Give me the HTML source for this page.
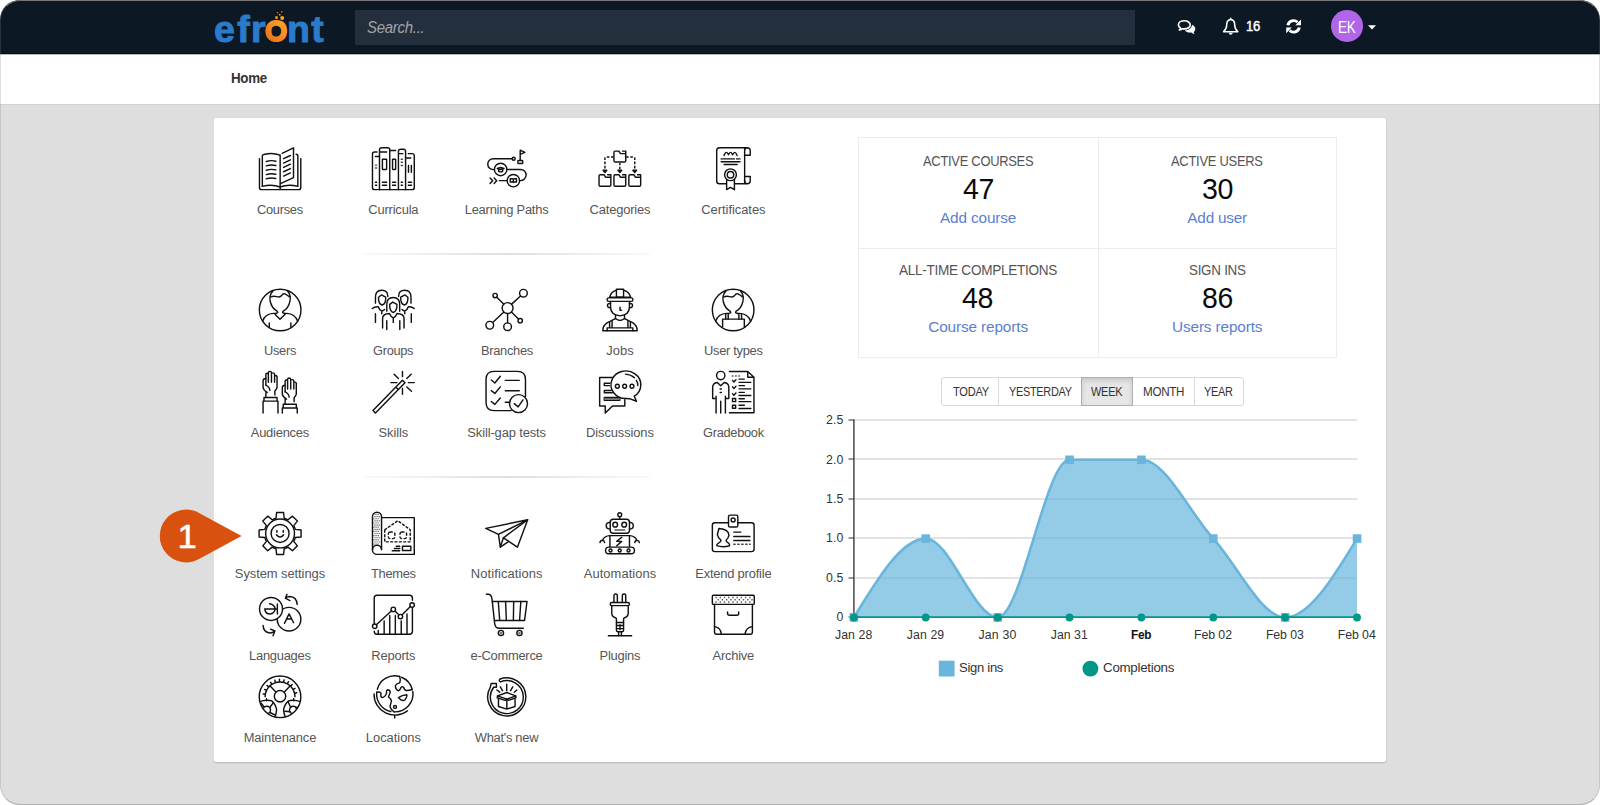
<!DOCTYPE html>
  <html lang="en">
  <head>
  <meta charset="utf-8">
  <title>eFront - Home</title>
  <style>
  *{box-sizing:border-box;margin:0;padding:0}
  html,body{width:1600px;height:805px;overflow:hidden;background:#fff}
  body{font-family:"Liberation Sans",Arial,sans-serif;color:#555;position:relative}
  #page{position:absolute;left:0;top:0;width:1600px;height:805px;background:#dedede;overflow:hidden}
  #mask{position:absolute;left:0;top:0;width:1600px;height:805px;border-radius:20px;border:1px solid rgba(128,128,128,.25);border-top-color:#77777c;border-bottom-color:#b2b2b2;box-shadow:0 0 0 40px #fff;z-index:50;pointer-events:none}
  #nav{position:absolute;left:0;top:0;width:1600px;height:54px;background:#0c1824;border-bottom:1px solid #040b15}
  #crumb{position:absolute;left:0;top:54px;width:1600px;height:51px;background:#fff;border-top:1px solid #b9bcbf;border-bottom:1px solid #d3d3d3}
  #search{position:absolute;left:355px;top:10px;width:780px;height:35px;background:#232f3c}
  #card{position:absolute;left:214px;top:118px;width:1172px;height:644px;background:#fff;border-radius:3px;box-shadow:0 1px 2px rgba(20,20,90,.2),-1px 0 0 rgba(255,255,255,.45)}
  .t{position:absolute;white-space:nowrap;display:block;text-decoration:none}
  svg{position:absolute;overflow:visible}
  svg.ic{width:44px;height:44px}
  svg.ic g{fill:none;stroke:#111;stroke-width:23;stroke-linecap:round;stroke-linejoin:round}
  .hr{position:absolute;left:363px;width:288px;height:2px;background:linear-gradient(to right,rgba(0,0,0,.02),rgba(0,0,0,.125),rgba(0,0,0,.02))}
  #stats{position:absolute;left:858px;top:137px;width:479px;height:221px;border:1px solid #ececec}
  #stats i{position:absolute;background:#ececec;display:block}
  #btns{position:absolute;left:941px;top:377px;width:303px;height:29px;border:1px solid #d9d9d9;border-radius:3px;background:#fff}
  #btns i{position:absolute;top:0;width:1px;height:27px;background:#dadada;display:block}
  #btns b{position:absolute;top:-1px;left:139px;width:52px;height:29px;background:#e6e6e6;border:1px solid #adadad;box-shadow:inset 0 3px 5px rgba(0,0,0,.125);display:block}
  </style>
  </head>
  <body>
  <div id="page">
  
<div id="nav"><div id="search"></div></div>
<span class="t" style="left:367.40px;top:17px;font-size:15.78px;line-height:21px;color:#a0a3a8;letter-spacing:-0.30px;transform:scaleX(0.9514);transform-origin:0 0;font-style:italic;">Search...</span>
<svg id="logo" style="left:205px;top:5px" width="130" height="45" viewBox="0 0 130 45">
  <defs><linearGradient id="og" x1="0" y1="1" x2="1" y2="0"><stop offset="0" stop-color="#ee6f20"/><stop offset="1" stop-color="#f9a521"/></linearGradient></defs>
  <text y="36.7" font-family="Liberation Sans, Arial, sans-serif" font-weight="bold" font-size="37.5" fill="#2a7bcb" stroke="#2a7bcb" stroke-width="1" stroke-linejoin="round" x="9 32.2 46 58.9 82 106.2">efr<tspan fill="#f3901f" stroke="none" font-size="40">o</tspan>nt</text>
  <circle cx="71.1" cy="26.1" r="8" fill="none" stroke="url(#og)" stroke-width="5.2"/>
  <circle cx="71.5" cy="12.6" r="1.5" fill="#f5951f"/><circle cx="77.2" cy="13" r="2" fill="#f9a521"/>
  <circle cx="74.7" cy="9.8" r="1" fill="#ee7d20"/><circle cx="72.5" cy="7.7" r=".8" fill="#e0701c"/><circle cx="76.8" cy="6.9" r=".8" fill="#e0701c"/>
  </svg>
<svg style="left:1177px;top:19px" width="19" height="16" viewBox="0 0 19 16">
  <path d="M7.6 11.3 C9 13 11 13.6 12.7 13.6 C13.3 13.6 13.8 13.5 14.3 13.4 C15.1 14.2 16.3 14.7 17.7 14.8 C17.1 14.2 16.7 13.6 16.5 12.9 C17.6 12.2 18.3 11.1 18.3 9.9 C18.3 8.1 17 6.5 15 5.8 C14.9 9.3 11.4 11.4 7.6 11.3 Z" fill="#fff"/>
  <path d="M7.3 1.8 C4 1.8 1.4 3.6 1.4 5.9 C1.4 7.1 2.2 8.2 3.5 9 C3.3 9.7 2.9 10.4 2.3 11 C3.7 10.9 4.9 10.4 5.7 9.7 C6.2 9.8 6.8 9.9 7.3 9.9 C10.6 9.9 13.2 8.1 13.2 5.9 C13.2 3.6 10.6 1.8 7.3 1.8 Z" fill="#0c1824" stroke="#fff" stroke-width="1.6" stroke-linejoin="round"/>
  </svg>
<svg style="left:1222px;top:17px" width="18" height="19" viewBox="0 0 18 19">
  <path d="M8.7 1.3 V2.4 M8.7 2.5 C6 2.8 4.7 5 4.7 7.8 C4.7 11.4 3.6 13.1 1.6 14.7 H15.8 C13.8 13.1 12.7 11.4 12.7 7.8 C12.7 5 11.4 2.8 8.7 2.5 Z" fill="none" stroke="#fff" stroke-width="1.5" stroke-linejoin="round" stroke-linecap="round"/>
  <path d="M6.7 15.7 a2 2 0 0 0 4 0 Z" fill="#fff"/>
  </svg>
<span class="t" style="left:1246.20px;top:17px;font-size:14.35px;line-height:19px;color:#fff;letter-spacing:-0.30px;transform:scaleX(0.9133);transform-origin:0 0;-webkit-text-stroke:.45px #fff;">16</span>
<svg style="left:1285px;top:18px" width="17" height="17" viewBox="0 0 17 17">
  <path d="M2.9 7.3 A5.8 5.8 0 0 1 12.6 4.3" fill="none" stroke="#fff" stroke-width="2.9"/>
  <path d="M16 1.6 V7.2 H10.4 Z" fill="#fff"/>
  <path d="M14.3 9.5 A5.8 5.8 0 0 1 4.6 12.5" fill="none" stroke="#fff" stroke-width="2.9"/>
  <path d="M1.2 15.2 V9.6 H6.8 Z" fill="#fff"/>
  </svg>
<div style="position:absolute;left:1331.2px;top:10.2px;width:31.6px;height:31.6px;border-radius:50%;background:#b066e6"></div>
<span class="t" style="left:1338.10px;top:17px;font-size:15.78px;line-height:21px;color:#fff;letter-spacing:-0.30px;transform:scaleX(0.8578);transform-origin:0 0;">EK</span>
<svg style="left:1367px;top:24px" width="10" height="6" viewBox="0 0 10 6"><path d="M1 1.2 H9 L5 5.4 Z" fill="#fff"/></svg>
<div id="crumb"></div>
<span class="t" style="left:230.80px;top:69px;font-size:14.35px;line-height:19px;color:#333;letter-spacing:-0.30px;transform:scaleX(0.9316);transform-origin:0 0;font-weight:bold;">Home</span>
<div id="card"></div>
<svg class="ic" style="left:258px;top:147px" viewBox="0 0 44 44"><g transform="translate(-3 -3) scale(0.06211)"><path d="M72 235 V700 Q72 735 105 735 H705 Q737 735 737 700 V235"/><path d="M118 682 V195 Q118 172 142 168 Q290 132 402 180"/><path d="M118 682 Q270 640 405 692 Q540 640 690 682 V195 Q690 165 662 165"/><path d="M405 182 V728"/><path d="M437 152 L620 62 V540 L410 637"/><path d="M182 282 Q260 255 335 277 M182 352 Q260 328 335 347 M182 422 Q260 398 335 417 M182 492 Q260 468 335 487 M182 560 Q260 540 335 555"/><path d="M460 237 L570 185 M460 307 L570 255 M460 377 L570 325 M460 447 L570 395 M460 517 L570 465"/></g></svg>
<span class="t" style="left:256.95px;top:201px;font-size:12.91px;line-height:17px;color:#555;letter-spacing:-0.30px;transform:scaleX(0.9962);transform-origin:0 0;">Courses</span>
<svg class="ic" style="left:371px;top:147px" viewBox="0 0 44 44"><g transform="translate(-3 -3) scale(0.06211)"><path d="M145 130 H105 Q72 130 72 165 V705 Q72 735 105 735 H710 Q745 735 745 705 V190 Q745 155 710 155 H650"/><path d="M185 735 V95 Q185 60 220 60 H315 Q350 60 350 95 V735"/><path d="M350 105 H445 M120 200 H185 M200 130 H300 M505 155 H560 M620 225 H690"/><path d="M490 735 V120 Q490 85 525 85 H570 Q605 85 605 120 V735"/><rect x="232" y="245" width="68" height="165" rx="6"/><rect x="395" y="245" width="50" height="165" rx="6"/><path d="M120 340 H140 M120 385 H140 M535 245 H555 M535 295 H555 M535 345 H555" opacity=".75"/><path d="M652 345 V455 M698 345 V455"/><path d="M120 615 H140 M120 665 H140 M232 615 H300 M232 665 H300 M395 615 H445 M395 665 H445 M535 615 H555 M535 665 H555 M650 615 H700 M650 665 H700"/></g></svg>
<span class="t" style="left:368.30px;top:201px;font-size:12.91px;line-height:17px;color:#555;letter-spacing:-0.18px;">Curricula</span>
<svg class="ic" style="left:485px;top:147px" viewBox="0 0 44 44"><g transform="translate(-3 -3) scale(0.06211)"><circle cx="510" cy="238" r="24"/><path d="M486 238 H180 A87 87 0 0 0 180 412 H200"/><circle cx="300" cy="410" r="100"/><path d="M400 410 H620 A90 90 0 0 1 620 590 H605"/><circle cx="505" cy="590" r="100"/><path d="M280 590 H405"/><path d="M130 548 L172 590 L130 635 M195 548 L237 590 L195 635"/><path d="M615 100 V265 M615 100 L690 135 L615 168"/><rect x="578" y="265" width="77" height="50" rx="10"/><path d="M245 395 L300 378 L355 395 L300 412 Z"/><path d="M268 412 V440 Q300 458 333 440 V412"/><path d="M455 560 H490 Q505 560 505 575 V620 Q505 612 490 612 H455 Z M555 560 H520 Q505 560 505 575 V620 Q505 612 520 612 H555 Z"/></g></svg>
<span class="t" style="left:464.70px;top:201px;font-size:12.91px;line-height:17px;color:#555;letter-spacing:-0.22px;">Learning Paths</span>
<svg class="ic" style="left:598px;top:147px" viewBox="0 0 44 44"><g transform="translate(-3 -3) scale(0.06211)"><path d="M305 270 V135 Q305 115 325 115 H385 L410 155 H495 V270 Q495 290 475 290 H325 Q305 290 305 270 Z M445 115 H495 V155"/><path d="M65 660 V515 Q65 495 85 495 H145 L170 535 H255 V660 Q255 680 235 680 H85 Q65 680 65 660 Z M205 495 H255 V535"/><path d="M305 660 V515 Q305 495 325 495 H385 L410 535 H495 V660 Q495 680 475 680 H325 Q305 680 305 660 Z M445 495 H495 V535"/><path d="M545 660 V515 Q545 495 565 495 H625 L650 535 H735 V660 Q735 680 715 680 H565 Q545 680 545 660 Z M685 495 H735 V535"/><path d="M300 208 H180 Q160 208 160 228 V405 M500 208 H620 Q640 208 640 228 V405 M400 300 V405" stroke-dasharray="42 26" stroke-linecap="butt"/><path d="M130 424 H190 L160 458 Z M370 424 H430 L400 458 Z M610 424 H670 L640 458 Z" fill="#111"/></g></svg>
<span class="t" style="left:589.60px;top:201px;font-size:12.91px;line-height:17px;color:#555;letter-spacing:-0.18px;">Categories</span>
<svg class="ic" style="left:711px;top:147px" viewBox="0 0 44 44"><g transform="translate(-3 -3) scale(0.06211)"><path d="M290 640 H185 Q140 640 140 595 V105 Q140 60 185 60 H630 Q680 60 680 110 V182 H590"/><path d="M590 110 Q590 60 632 60 M590 75 V625"/><path d="M590 522 H680 V590 Q680 640 632 640 H435 M590 590 Q590 640 632 640"/><path d="M258 185 Q275 135 295 135 Q315 135 330 175 Q345 135 362 135 Q380 135 395 175 Q415 135 432 135 Q450 135 468 185"/><path d="M212 240 H425 M460 240 H515 M212 285 H515 M260 330 H470"/><circle cx="362" cy="495" r="95"/><circle cx="362" cy="495" r="52"/><path d="M300 572 V735 L362 700 L425 735 V572"/></g></svg>
<span class="t" style="left:701.30px;top:201px;font-size:12.91px;line-height:17px;color:#555;letter-spacing:-0.03px;">Certificates</span>
<svg class="ic" style="left:258px;top:288px" viewBox="0 0 44 44"><g transform="translate(-3 -3) scale(0.06211)"><circle cx="405" cy="403" r="335"/><path d="M290 92 Q225 170 245 262 Q268 372 360 425 L366 446 L330 462"/><path d="M522 92 Q585 170 562 262 Q540 372 450 425 L444 446 L478 462"/><path d="M255 190 Q300 172 350 187 Q402 203 430 170 Q448 132 482 142 Q522 162 552 190"/><path d="M125 582 Q160 462 300 457 H335 M475 457 H510 Q642 462 687 582"/><path d="M322 470 L402 550 L485 470"/><path d="M230 612 V682 M577 612 V682"/></g></svg>
<span class="t" style="left:263.85px;top:342px;font-size:12.91px;line-height:17px;color:#555;letter-spacing:-0.30px;transform:scaleX(0.9936);transform-origin:0 0;">Users</span>
<svg class="ic" style="left:371px;top:288px" viewBox="0 0 44 44"><g transform="translate(-3 -3) scale(0.06211)"><path d="M120 292 V200 Q120 85 220 85 Q320 85 320 185"/><path d="M170 197 L215 160 L285 197 Q292 300 227 322 Q163 300 170 197 Z"/><path d="M70 378 Q110 343 165 350 Q180 400 225 420 Q250 410 267 395 M222 420 V462 M120 462 V602"/><path d="M692 292 V200 Q692 85 592 85 Q492 85 492 185"/><path d="M642 197 L597 160 L527 197 Q520 300 585 322 Q649 300 642 197 Z"/><path d="M745 378 Q702 343 650 350 Q635 400 590 420 Q565 410 548 395 M592 420 V462 M697 462 V602"/><path d="M303 422 V310 Q303 200 405 200 Q510 200 510 310 V422"/><path d="M350 312 L400 275 L465 312 Q472 420 407 442 Q343 420 350 312 Z"/><path d="M235 692 V540 Q235 465 345 460 Q365 510 407 530 Q450 510 467 460 Q580 465 580 540 V692 M407 530 V602 M302 577 V717 M512 577 V717"/></g></svg>
<span class="t" style="left:373.15px;top:342px;font-size:12.91px;line-height:17px;color:#555;letter-spacing:-0.30px;transform:scaleX(0.9919);transform-origin:0 0;">Groups</span>
<svg class="ic" style="left:485px;top:288px" viewBox="0 0 44 44"><g transform="translate(-3 -3) scale(0.06211)"><circle cx="412" cy="372" r="88"/><circle cx="667" cy="132" r="62"/><circle cx="212" cy="170" r="35"/><circle cx="125" cy="648" r="62"/><circle cx="412" cy="672" r="62"/><circle cx="615" cy="575" r="35"/><path d="M620 176 L478 308 M238 196 L348 306 M172 604 L348 438 M412 462 V608 M478 438 L588 548"/></g></svg>
<span class="t" style="left:480.60px;top:342px;font-size:12.91px;line-height:17px;color:#555;letter-spacing:-0.30px;transform:scaleX(0.9953);transform-origin:0 0;">Branches</span>
<svg class="ic" style="left:598px;top:288px" viewBox="0 0 44 44"><g transform="translate(-3 -3) scale(0.06211)"><path d="M235 197 Q262 102 345 85 M460 85 Q545 102 575 197 M235 197 H575"/><rect x="345" y="68" width="115" height="129"/><rect x="195" y="207" width="415" height="57" rx="26"/><path d="M250 266 V350 Q250 482 402 497 Q555 482 555 350 V266"/><path d="M250 300 Q200 290 200 330 Q205 370 250 365 M555 300 Q605 290 605 330 Q600 370 555 365"/><path d="M403 357 V407 H425"/><path d="M330 490 V540 Q402 602 475 540 V490"/><path d="M330 540 L200 605 Q125 650 125 737 H680 Q680 650 605 605 L475 540"/><path d="M235 600 V690 M275 585 V690 M530 585 V690 M570 600 V690 M195 737 V690 H610 V737"/></g></svg>
<span class="t" style="left:606.15px;top:342px;font-size:12.91px;line-height:17px;color:#555;letter-spacing:0.14px;">Jobs</span>
<svg class="ic" style="left:711px;top:288px" viewBox="0 0 44 44"><g transform="translate(-3 -3) scale(0.06211)"><circle cx="405" cy="403" r="335"/><path d="M290 92 Q225 170 245 262 Q268 372 360 425 L366 446 L330 462"/><path d="M522 92 Q585 170 562 262 Q540 372 450 425 L444 446 L478 462"/><path d="M255 190 Q300 172 350 187 Q402 203 430 170 Q448 132 482 142 Q522 162 552 190"/><path d="M125 582 Q160 462 300 457 H335 M475 457 H510 Q642 462 687 582"/><path d="M285 462 V550 M325 462 V550 M497 462 V550 M540 462 V550"/><path d="M235 672 V550 H585 V672"/></g></svg>
<span class="t" style="left:703.95px;top:342px;font-size:12.91px;line-height:17px;color:#555;letter-spacing:-0.30px;transform:scaleX(0.9984);transform-origin:0 0;">User types</span>
<svg class="ic" style="left:258px;top:370px" viewBox="0 0 44 44"><g transform="translate(-3 -3) scale(0.06211)"><path d="M175 185 Q130 185 130 222 V330 Q135 372 197 410 M175 412 V490"/><path d="M175 292 V120 Q175 100 195 100 Q215 100 215 120 M215 245 V92 Q215 70 240 70 Q265 70 265 92 V245 M265 102 Q268 95 290 95 Q315 95 315 120 V245 M315 137 Q342 130 355 152 V330 Q350 352 320 387 V450"/><path d="M175 292 Q230 312 240 377"/><path d="M145 550 V490 H355 V550 M130 742 V550 H370 V742"/><g transform="translate(310 108)"><path d="M175 185 Q130 185 130 222 V330 Q135 372 197 410 M175 412 V490"/><path d="M175 292 V120 Q175 100 195 100 Q215 100 215 120 M215 245 V92 Q215 70 240 70 Q265 70 265 92 V245 M265 102 Q268 95 290 95 Q315 95 315 120 V245 M315 137 Q342 130 355 152 V330 Q350 352 320 387 V450"/><path d="M175 292 Q230 312 240 377"/></g><path d="M455 660 V600 H665 V660 M440 742 V660 H680 V742"/></g></svg>
<span class="t" style="left:250.75px;top:424px;font-size:12.91px;line-height:17px;color:#555;letter-spacing:-0.22px;">Audiences</span>
<svg class="ic" style="left:371px;top:370px" viewBox="0 0 44 44"><g transform="translate(-3 -3) scale(0.06211)"><path d="M80 700 L555 215 L595 255 L120 740 Z M450 325 L487 362"/><path d="M555 70 V155 M555 345 V440 M370 252 H465 M650 252 H745 M420 115 L490 185 M695 115 L625 185 M625 322 L700 392"/></g></svg>
<span class="t" style="left:378.60px;top:424px;font-size:12.91px;line-height:17px;color:#555;letter-spacing:-0.11px;">Skills</span>
<svg class="ic" style="left:485px;top:370px" viewBox="0 0 44 44"><g transform="translate(-3 -3) scale(0.06211)"><path d="M470 702 H195 Q65 702 65 572 V200 Q65 70 195 70 H570 Q700 70 700 200 V477"/><path d="M150 210 L207 257 L295 150 M150 380 L207 427 L295 320 M150 555 L207 602 L295 500"/><path d="M375 215 H600 M375 383 H600 M375 568 H437"/><circle cx="588" cy="590" r="145"/><path d="M520 590 L582 642 L660 530"/></g></svg>
<span class="t" style="left:467.35px;top:424px;font-size:12.91px;line-height:17px;color:#555;letter-spacing:-0.12px;">Skill-gap tests</span>
<svg class="ic" style="left:598px;top:370px" viewBox="0 0 44 44"><g transform="translate(-3 -3) scale(0.06211)"><path d="M285 170 H75 V627 H165 V742 L282 627 H480 V525"/><path d="M240 262 H150 V300 H232 M262 377 H150 V415 H280 M400 490 H150 V537 H400 Z"/><path d="M150 513 H400" stroke="#666" stroke-width="30"/><path d="M632 470 L668 552 L555 510 Q525 508 495 508 A240 222 0 1 1 632 470 Z"/><circle cx="360" cy="310" r="31"/><circle cx="477" cy="310" r="31"/><circle cx="595" cy="310" r="31"/><path d="M490 115 Q580 122 635 172 M665 215 Q690 250 690 297"/></g></svg>
<span class="t" style="left:586.05px;top:424px;font-size:12.91px;line-height:17px;color:#555;letter-spacing:-0.10px;">Discussions</span>
<svg class="ic" style="left:711px;top:370px" viewBox="0 0 44 44"><g transform="translate(-3 -3) scale(0.06211)"><circle cx="205" cy="138" r="67"/><path d="M130 742 V470 M130 507 H75 V330 Q75 260 150 250 L205 302 L260 250 Q335 260 335 330 V507 H280 M280 470 V742 M205 552 V742"/><path d="M195 355 H215 M195 410 H215"/><path d="M345 72 H640 L740 165 V737 H345 M640 72 V165 H740"/><path d="M390 145 H402 M443 145 H455 M495 145 H507" opacity=".7"/><path d="M395 215 L417 240 L450 205 M395 320 L417 345 L450 310 M395 430 L417 455 L450 420"/><path d="M500 195 H585 M500 247 H690 M500 300 H585 M500 352 H690 M500 408 H585 M500 460 H690 M500 510 H585 M500 558 H690 M500 615 H585 M500 667 H690"/><rect x="395" y="508" width="50" height="50"/><rect x="395" y="615" width="50" height="50"/></g></svg>
<span class="t" style="left:702.85px;top:424px;font-size:12.91px;line-height:17px;color:#555;letter-spacing:-0.30px;transform:scaleX(0.9934);transform-origin:0 0;">Gradebook</span>
<svg class="ic" style="left:258px;top:511px" viewBox="0 0 44 44"><g transform="translate(-3 -3) scale(0.06211)"><path d="M338.0 164.7 L348.0 72.0 L460.0 72.0 L470.0 164.7 A254 254 0 0 1 530.8 189.9 L603.4 131.4 L682.6 210.6 L624.1 283.2 A254 254 0 0 1 649.3 344.0 L742.0 354.0 L742.0 466.0 L649.3 476.0 A254 254 0 0 1 624.1 536.8 L682.6 609.4 L603.4 688.6 L530.8 630.1 A254 254 0 0 1 470.0 655.3 L460.0 748.0 L348.0 748.0 L338.0 655.3 A254 254 0 0 1 277.2 630.1 L204.6 688.6 L125.4 609.4 L183.9 536.8 A254 254 0 0 1 158.7 476.0 L66.0 466.0 L66.0 354.0 L158.7 344.0 A254 254 0 0 1 183.9 283.2 L125.4 210.6 L204.6 131.4 L277.2 189.9 A254 254 0 0 1 338.0 164.7 Z"/><circle cx="404" cy="410" r="232"/><circle cx="404" cy="410" r="145"/><path d="M353 362 V390 M455 362 V390 M345 430 Q403 502 462 430"/></g></svg>
<span class="t" style="left:234.85px;top:565px;font-size:12.91px;line-height:17px;color:#555;letter-spacing:-0.06px;">System settings</span>
<svg class="ic" style="left:371px;top:511px" viewBox="0 0 44 44"><g transform="translate(-3 -3) scale(0.06211)"><path d="M218 662 V140 A73 73 0 0 0 72 140 V675 A73 73 0 0 0 145 747 H745 V155 H218"/><path d="M72 672 A73 73 0 0 1 218 672"/><path d="M86 105 h19 M120 105 h19 M154 105 h19 M103 139 h19 M137 139 h19 M171 139 h19 M86 173 h19 M120 173 h19 M154 173 h19 M103 207 h19 M137 207 h19 M171 207 h19 M86 241 h19 M120 241 h19 M154 241 h19 M103 275 h19 M137 275 h19 M171 275 h19 M86 309 h19 M120 309 h19 M154 309 h19 M103 343 h19 M137 343 h19 M171 343 h19 M86 377 h19 M120 377 h19 M154 377 h19 M103 411 h19 M137 411 h19 M171 411 h19 M86 445 h19 M120 445 h19 M154 445 h19 M103 479 h19 M137 479 h19 M171 479 h19 M86 513 h19 M120 513 h19 M154 513 h19 M103 547 h19 M137 547 h19 M171 547 h19 M86 581 h19 M120 581 h19 M154 581 h19 " stroke="#555" stroke-width="19" stroke-linecap="butt"/><path d="M270 350 L480 205 L680 350 V545 H270 Z" stroke-dasharray="32 38"/><rect x="327" y="387" width="106" height="106" rx="30" stroke-dasharray="34 42"/><rect x="515" y="387" width="106" height="106" rx="30" stroke-dasharray="34 42"/><rect x="555" y="615" width="135" height="70"/><path d="M455 617 H510 M425 652 H510 M390 687 H510"/></g></svg>
<span class="t" style="left:370.90px;top:565px;font-size:12.91px;line-height:17px;color:#555;letter-spacing:-0.30px;transform:scaleX(0.9971);transform-origin:0 0;">Themes</span>
<svg class="ic" style="left:485px;top:511px" viewBox="0 0 44 44"><g transform="translate(-3 -3) scale(0.06211)"><path d="M60 328 L735 190 L265 425 Z"/><path d="M265 425 L295 630 L345 480"/><path d="M735 190 L345 480 L570 630 Z"/><path d="M295 630 L420 545"/></g></svg>
<span class="t" style="left:470.80px;top:565px;font-size:12.91px;line-height:17px;color:#555;letter-spacing:0.12px;">Notifications</span>
<svg class="ic" style="left:598px;top:511px" viewBox="0 0 44 44"><g transform="translate(-3 -3) scale(0.06211)"><circle cx="398" cy="108" r="31"/><path d="M398 140 V180"/><rect x="245" y="180" width="310" height="226" rx="48"/><circle cx="325" cy="268" r="38"/><circle cx="470" cy="268" r="38"/><path d="M322 355 H480" stroke="#555"/><path d="M245 230 Q180 235 180 285 Q180 335 245 340 M555 230 Q617 235 617 285 Q617 335 555 340"/><path d="M240 625 V445 H555 V625"/><path d="M430 470 L350 537 H430 L350 607"/><path d="M240 445 Q150 450 120 520 M80 557 Q85 520 120 520 Q150 525 155 557 M555 445 Q645 450 675 520 M640 557 Q645 520 675 520 Q710 525 715 557"/><rect x="170" y="630" width="465" height="107" rx="53"/><circle cx="250" cy="683" r="24"/><circle cx="398" cy="683" r="24"/><circle cx="540" cy="683" r="24"/></g></svg>
<span class="t" style="left:583.70px;top:565px;font-size:12.91px;line-height:17px;color:#555;letter-spacing:0.08px;">Automations</span>
<svg class="ic" style="left:711px;top:511px" viewBox="0 0 44 44"><g transform="translate(-3 -3) scale(0.06211)"><path d="M330 237 H110 Q70 237 70 277 V660 Q70 702 110 702 H700 Q742 702 742 660 V277 Q742 237 700 237 H480"/><rect x="330" y="115" width="150" height="192" rx="26"/><circle cx="405" cy="192" r="32"/><path d="M175 330 Q240 338 270 350 Q330 372 337 440 Q330 482 290 520 Q290 545 330 565 Q352 585 347 607 Q240 642 140 607 Q135 580 175 560 Q210 545 210 520 Q160 480 150 430 Q165 380 175 330 Z"/><path d="M415 388 H530 M415 458 H675 M415 523 H675"/><path d="M415 583 H680" stroke-dasharray="22 42" opacity=".8"/></g></svg>
<span class="t" style="left:695.25px;top:565px;font-size:12.91px;line-height:17px;color:#555;letter-spacing:-0.20px;">Extend profile</span>
<svg class="ic" style="left:258px;top:593px" viewBox="0 0 44 44"><g transform="translate(-3 -3) scale(0.06211)"><circle cx="548" cy="470" r="190"/><circle cx="258" cy="305" r="185" fill="#fff"/><path d="M360 225 V387 M155 305 H360 M160 322 Q175 387 240 387 Q312 380 327 305 Q312 237 235 222"/><path d="M475 537 L548 385 L622 527 M510 467 H587"/><path d="M680 232 Q670 112 560 105 Q520 105 490 130 M515 70 L488 132 L562 170"/><path d="M130 570 Q135 682 240 692 Q280 694 315 667 M250 630 L320 660 L290 737"/></g></svg>
<span class="t" style="left:249.05px;top:647px;font-size:12.91px;line-height:17px;color:#555;letter-spacing:-0.25px;">Languages</span>
<svg class="ic" style="left:371px;top:593px" viewBox="0 0 44 44"><g transform="translate(-3 -3) scale(0.06211)"><path d="M100 545 V130 Q100 85 145 85 H670 Q715 85 715 130 V165 M715 282 V665 Q715 712 670 712 H145 Q100 712 100 665"/><circle cx="108" cy="583" r="36"/><circle cx="408" cy="312" r="36"/><circle cx="522" cy="428" r="36"/><circle cx="710" cy="240" r="36"/><path d="M135 560 L380 335 M435 340 L495 400 M550 400 L683 267"/><path d="M165 650 V707 M260 500 V707 M350 410 V707 M440 410 V707 M535 500 V707 M628 385 V707"/></g></svg>
<span class="t" style="left:371.35px;top:647px;font-size:12.91px;line-height:17px;color:#555;letter-spacing:-0.18px;">Reports</span>
<svg class="ic" style="left:485px;top:593px" viewBox="0 0 44 44"><g transform="translate(-3 -3) scale(0.06211)"><path d="M70 68 H100 Q150 70 160 140 L205 545 Q215 617 280 617 H665"/><path d="M168 185 H725 L685 490 H200"/><path d="M262 185 L285 490 M380 185 L392 490 M510 185 L505 490 M625 185 L605 490"/><circle cx="305" cy="692" r="42"/><circle cx="603" cy="692" r="42"/><circle cx="305" cy="692" r="10" fill="#777" stroke="#777"/><circle cx="603" cy="692" r="10" fill="#777" stroke="#777"/></g></svg>
<span class="t" style="left:470.60px;top:647px;font-size:12.91px;line-height:17px;color:#555;letter-spacing:-0.27px;">e-Commerce</span>
<svg class="ic" style="left:598px;top:593px" viewBox="0 0 44 44"><g transform="translate(-3 -3) scale(0.06211)"><path d="M305 200 V90 Q305 65 332 65 Q360 65 360 90 V200 M440 200 V90 Q440 65 468 65 Q495 65 495 90 V200"/><rect x="245" y="200" width="310" height="52" rx="26"/><path d="M270 252 V370 Q270 430 330 447 Q345 452 345 470 V650 Q345 672 365 672 H440 Q460 672 460 650 V470 Q460 452 475 447 Q535 430 535 370 V252"/><path d="M345 522 H460 M355 572 H450 M355 622 H450 M403 557 V637"/><path d="M380 672 V732 M425 672 V732"/><path d="M215 737 H590"/></g></svg>
<span class="t" style="left:599.60px;top:647px;font-size:12.91px;line-height:17px;color:#555;letter-spacing:-0.26px;">Plugins</span>
<svg class="ic" style="left:711px;top:593px" viewBox="0 0 44 44"><g transform="translate(-3 -3) scale(0.06211)"><rect x="70" y="85" width="675" height="147" rx="16"/><path d="M119 122 h22 M187 122 h22 M255 122 h22 M323 122 h22 M391 122 h22 M459 122 h22 M527 122 h22 M595 122 h22 M663 122 h22 M153 158 h22 M221 158 h22 M289 158 h22 M357 158 h22 M425 158 h22 M493 158 h22 M561 158 h22 M629 158 h22 M697 158 h22 M119 194 h22 M187 194 h22 M255 194 h22 M323 194 h22 M391 194 h22 M459 194 h22 M527 194 h22 M595 194 h22 M663 194 h22 " stroke="#555" stroke-width="24" stroke-linecap="butt"/><path d="M105 232 V675 Q105 712 140 712 H680 Q715 712 715 675 V232"/><path d="M315 355 V375 Q315 407 345 407 H465 Q495 407 495 375 V355"/><path d="M105 590 Q205 600 215 712 M715 590 Q610 600 595 712"/></g></svg>
<span class="t" style="left:712.55px;top:647px;font-size:12.91px;line-height:17px;color:#555;letter-spacing:-0.23px;">Archive</span>
<svg class="ic" style="left:258px;top:675px" viewBox="0 0 44 44"><g transform="translate(-3 -3) scale(0.06211)"><clipPath id="mc"><circle cx="403" cy="400" r="330"/></clipPath><circle cx="403" cy="400" r="335"/><circle cx="403" cy="390" r="92"/><path d="M163 400 A240 240 0 0 1 643 400"/><path d="M165 359 L132 354 M184 294 L153 281 M219 238 L193 216 M269 193 L250 165 M329 164 L318 131 M395 152 L393 118 M461 159 L469 126 M523 184 L540 155 M576 225 L600 202 M615 279 L645 263 M638 342 L671 335 "/><path d="M332 318 L240 222 M476 318 L568 222"/><g clip-path="url(#mc)"><path d="M70 478 Q185 438 270 465 Q335 520 348 610 Q342 670 322 725"/><path d="M736 478 Q620 438 540 465 Q474 520 460 610 Q465 670 488 725"/><circle cx="190" cy="612" r="60"/><circle cx="616" cy="612" r="60"/><path d="M185 430 V462 M622 430 V462 M95 500 L145 560 M238 572 L290 500 M240 652 L322 692 M575 572 L535 482 M565 640 L480 632 M655 575 L715 560 M130 650 L170 668 M650 660 L690 640"/></g></g></svg>
<span class="t" style="left:243.65px;top:729px;font-size:12.91px;line-height:17px;color:#555;letter-spacing:-0.12px;">Maintenance</span>
<svg class="ic" style="left:371px;top:675px" viewBox="0 0 44 44"><g transform="translate(-3 -3) scale(0.06211)"><path d="M150 277 A290 290 0 0 1 510 72 M540 85 A290 290 0 0 1 712 282 M722 312 A290 290 0 0 1 420 642 M140 327 A290 290 0 0 0 367 637"/><path d="M97 355 A335 335 0 0 0 637 624 M430 692 V742"/><path d="M510 72 Q530 130 510 175 Q440 190 440 237 Q450 292 490 302 Q520 292 530 250 Q550 220 575 250 Q590 302 620 297 Q670 297 712 282"/><path d="M140 327 Q190 315 210 340 Q195 400 230 412 Q280 400 300 340 Q290 290 320 285 Q362 290 357 335 Q340 370 330 402 Q370 430 377 470 Q360 520 355 560 Q370 612 420 642"/><path d="M490 412 Q550 370 620 365 Q642 380 600 442 Q570 472 530 450 Z"/><circle cx="435" cy="562" r="24"/></g></svg>
<span class="t" style="left:365.85px;top:729px;font-size:12.91px;line-height:17px;color:#555;letter-spacing:-0.02px;">Locations</span>
<svg class="ic" style="left:485px;top:675px" viewBox="0 0 44 44"><g transform="translate(-3 -3) scale(0.06211)"><path d="M290 113 A307 307 0 1 1 133 246 L147 185 H232 V245 H188 M297 160 A265 265 0 1 1 188 245 M290 113 Q262 137 297 160"/><path d="M250 385 L400 330 L542 385 L400 437 Z"/><path d="M265 437 V555 L400 597 L532 555 V437 M400 437 V597"/><path d="M250 385 L245 415 L370 457 L400 437 M542 385 L547 415 L425 457 L400 437"/><path d="M398 195 V300 M295 240 L330 300 M495 240 L460 300 M240 290 L285 325 M560 290 L520 325"/></g></svg>
<span class="t" style="left:474.85px;top:729px;font-size:12.91px;line-height:17px;color:#555;letter-spacing:-0.30px;">What's new</span>
<div class="hr" style="top:253px"></div>
<div class="hr" style="top:476px"></div>
<svg style="left:155px;top:505px" width="92" height="62" viewBox="155 505 92 62">
  <path d="M241.6 536 L199.5 513.2 A26.4 26.4 0 1 0 199.5 558.8 Z" fill="#d9510f"/>
  <text x="187.2" y="547.7" text-anchor="middle" font-family="Liberation Sans, Arial, sans-serif" font-size="34" fill="#fff" stroke="#fff" stroke-width=".7">1</text>
  </svg>
<div id="stats"><i style="left:239px;top:0;width:1px;height:219px"></i><i style="left:0;top:109.5px;width:477px;height:1px"></i></div>
<span class="t" style="left:922.90px;top:152px;font-size:14.35px;line-height:19px;color:#555;letter-spacing:-0.30px;transform:scaleX(0.9000);transform-origin:0 0;">ACTIVE COURSES</span>
<span class="t" style="left:962.50px;top:169px;font-size:29.72px;line-height:39px;color:#0a0a0a;letter-spacing:-0.30px;transform:scaleX(0.9588);transform-origin:0 0;">47</span>
<a class="t" style="left:939.95px;top:208px;font-size:15.37px;line-height:20px;color:#5b80d0;letter-spacing:-0.14px;">Add course</a>
<span class="t" style="left:1171.30px;top:152px;font-size:14.35px;line-height:19px;color:#555;letter-spacing:-0.30px;transform:scaleX(0.9023);transform-origin:0 0;">ACTIVE USERS</span>
<span class="t" style="left:1201.55px;top:169px;font-size:29.72px;line-height:39px;color:#0a0a0a;letter-spacing:-0.30px;transform:scaleX(0.9619);transform-origin:0 0;">30</span>
<a class="t" style="left:1187.30px;top:208px;font-size:15.37px;line-height:20px;color:#5b80d0;letter-spacing:-0.22px;">Add user</a>
<span class="t" style="left:898.95px;top:261px;font-size:14.35px;line-height:19px;color:#555;letter-spacing:-0.30px;transform:scaleX(0.9472);transform-origin:0 0;">ALL-TIME COMPLETIONS</span>
<span class="t" style="left:962.45px;top:278px;font-size:29.72px;line-height:39px;color:#0a0a0a;letter-spacing:-0.30px;transform:scaleX(0.9619);transform-origin:0 0;">48</span>
<a class="t" style="left:928.20px;top:317px;font-size:15.37px;line-height:20px;color:#5b80d0;letter-spacing:-0.13px;">Course reports</a>
<span class="t" style="left:1188.80px;top:261px;font-size:14.35px;line-height:19px;color:#555;letter-spacing:-0.30px;transform:scaleX(0.9360);transform-origin:0 0;">SIGN INS</span>
<span class="t" style="left:1201.65px;top:278px;font-size:29.72px;line-height:39px;color:#0a0a0a;letter-spacing:-0.30px;transform:scaleX(0.9558);transform-origin:0 0;">86</span>
<a class="t" style="left:1172.00px;top:317px;font-size:15.37px;line-height:20px;color:#5b80d0;letter-spacing:-0.14px;">Users reports</a>
<div id="btns"><i style="left:56px"></i><i style="left:252px"></i><b></b></div>
<span class="t" style="left:952.65px;top:384px;font-size:12.3px;line-height:16px;color:#333;letter-spacing:-0.30px;transform:scaleX(0.9016);transform-origin:0 0;">TODAY</span>
<span class="t" style="left:1008.80px;top:384px;font-size:12.3px;line-height:16px;color:#333;letter-spacing:-0.30px;transform:scaleX(0.8849);transform-origin:0 0;">YESTERDAY</span>
<span class="t" style="left:1091.45px;top:384px;font-size:12.3px;line-height:16px;color:#333;letter-spacing:-0.30px;transform:scaleX(0.8918);transform-origin:0 0;">WEEK</span>
<span class="t" style="left:1143.05px;top:384px;font-size:12.3px;line-height:16px;color:#333;letter-spacing:-0.30px;transform:scaleX(0.9455);transform-origin:0 0;">MONTH</span>
<span class="t" style="left:1204.30px;top:384px;font-size:12.3px;line-height:16px;color:#333;letter-spacing:-0.30px;transform:scaleX(0.8898);transform-origin:0 0;">YEAR</span>
<svg style="left:810px;top:405px" width="580" height="290" viewBox="810 405 580 290" font-family="Liberation Sans, Arial, sans-serif"><path d="M848.5 617.00 H853.9" stroke="#444" stroke-width="1.1"/><path d="M853.9 578.00 H1357.1" stroke="#c6c6c6" stroke-width="1"/><path d="M848.5 578.00 H853.9" stroke="#444" stroke-width="1.1"/><path d="M853.9 538.00 H1357.1" stroke="#c6c6c6" stroke-width="1"/><path d="M848.5 538.00 H853.9" stroke="#444" stroke-width="1.1"/><path d="M853.9 499.00 H1357.1" stroke="#c6c6c6" stroke-width="1"/><path d="M848.5 499.00 H853.9" stroke="#444" stroke-width="1.1"/><path d="M853.9 459.00 H1357.1" stroke="#c6c6c6" stroke-width="1"/><path d="M848.5 459.00 H853.9" stroke="#444" stroke-width="1.1"/><path d="M853.9 420.00 H1357.1" stroke="#c6c6c6" stroke-width="1"/><path d="M848.5 420.00 H853.9" stroke="#444" stroke-width="1.1"/><path d="M853.90 419.40 V617.70" stroke="#2a2a2a" stroke-width="1.3"/><path d="M853.90 617.40 C877.86 578.00 901.82 538.60 925.78 538.60 C949.74 538.60 973.70 617.40 997.66 617.40 C1021.62 617.40 1045.58 459.80 1069.54 459.80 C1093.50 459.80 1117.46 459.80 1141.42 459.80 C1165.38 459.80 1189.34 512.33 1213.30 538.60 C1237.26 564.87 1261.22 617.40 1285.18 617.40 C1309.14 617.40 1333.10 578.00 1357.06 538.60 L1357.06 617.40 L853.90 617.40 Z" fill="#66b6dd" fill-opacity=".7"/><path d="M853.90 617.40 C877.86 578.00 901.82 538.60 925.78 538.60 C949.74 538.60 973.70 617.40 997.66 617.40 C1021.62 617.40 1045.58 459.80 1069.54 459.80 C1093.50 459.80 1117.46 459.80 1141.42 459.80 C1165.38 459.80 1189.34 512.33 1213.30 538.60 C1237.26 564.87 1261.22 617.40 1285.18 617.40 C1309.14 617.40 1333.10 578.00 1357.06 538.60" fill="none" stroke="#69b5dc" stroke-width="2.6" stroke-linejoin="round"/><rect x="849.60" y="613.10" width="8.6" height="8.6" fill="#69b5dc"/><rect x="921.48" y="534.30" width="8.6" height="8.6" fill="#69b5dc"/><rect x="993.36" y="613.10" width="8.6" height="8.6" fill="#69b5dc"/><rect x="1065.24" y="455.50" width="8.6" height="8.6" fill="#69b5dc"/><rect x="1137.12" y="455.50" width="8.6" height="8.6" fill="#69b5dc"/><rect x="1209.00" y="534.30" width="8.6" height="8.6" fill="#69b5dc"/><rect x="1280.88" y="613.10" width="8.6" height="8.6" fill="#69b5dc"/><rect x="1352.76" y="534.30" width="8.6" height="8.6" fill="#69b5dc"/><path d="M853.90 617.10 H1357.06" stroke="#009688" stroke-width="1.7"/><circle cx="853.90" cy="617.50" r="3.9" fill="#009688"/><circle cx="925.78" cy="617.50" r="3.9" fill="#009688"/><circle cx="997.66" cy="617.50" r="3.9" fill="#009688"/><circle cx="1069.54" cy="617.50" r="3.9" fill="#009688"/><circle cx="1141.42" cy="617.50" r="3.9" fill="#009688"/><circle cx="1213.30" cy="617.50" r="3.9" fill="#009688"/><circle cx="1285.18" cy="617.50" r="3.9" fill="#009688"/><circle cx="1357.06" cy="617.50" r="3.9" fill="#009688"/><rect x="938.8" y="660.7" width="15.8" height="15.8" fill="#69b5dc"/><circle cx="1090.4" cy="668.6" r="7.9" fill="#009688"/></svg>
<span class="t" style="left:836.46px;top:609px;font-size:12.3px;line-height:16px;color:#333;">0</span>
<span class="t" style="left:826.10px;top:570px;font-size:12.3px;line-height:16px;color:#333;letter-spacing:0.05px;">0.5</span>
<span class="t" style="left:826.10px;top:530px;font-size:12.3px;line-height:16px;color:#333;letter-spacing:0.05px;">1.0</span>
<span class="t" style="left:826.10px;top:491px;font-size:12.3px;line-height:16px;color:#333;letter-spacing:0.05px;">1.5</span>
<span class="t" style="left:826.10px;top:452px;font-size:12.3px;line-height:16px;color:#333;letter-spacing:0.05px;">2.0</span>
<span class="t" style="left:826.10px;top:412px;font-size:12.3px;line-height:16px;color:#333;letter-spacing:0.05px;">2.5</span>
<span class="t" style="left:834.90px;top:627px;font-size:12.3px;line-height:16px;color:#333;letter-spacing:0.10px;">Jan 28</span>
<span class="t" style="left:906.78px;top:627px;font-size:12.3px;line-height:16px;color:#333;letter-spacing:0.10px;">Jan 29</span>
<span class="t" style="left:978.46px;top:627px;font-size:12.3px;line-height:16px;color:#333;letter-spacing:0.18px;">Jan 30</span>
<span class="t" style="left:1050.74px;top:627px;font-size:12.3px;line-height:16px;color:#333;letter-spacing:0.02px;">Jan 31</span>
<span class="t" style="left:1130.87px;top:627px;font-size:12.3px;line-height:16px;color:#111;letter-spacing:-0.30px;transform:scaleX(0.9638);transform-origin:0 0;font-weight:bold;">Feb</span>
<span class="t" style="left:1194.00px;top:627px;font-size:12.3px;line-height:16px;color:#333;letter-spacing:-0.06px;">Feb 02</span>
<span class="t" style="left:1265.88px;top:627px;font-size:12.3px;line-height:16px;color:#333;letter-spacing:-0.06px;">Feb 03</span>
<span class="t" style="left:1337.76px;top:627px;font-size:12.3px;line-height:16px;color:#333;letter-spacing:-0.06px;">Feb 04</span>
<span class="t" style="left:959.40px;top:659px;font-size:13.32px;line-height:18px;color:#333;letter-spacing:-0.30px;transform:scaleX(0.9803);transform-origin:0 0;">Sign ins</span>
<span class="t" style="left:1103.10px;top:659px;font-size:13.32px;line-height:18px;color:#333;letter-spacing:-0.28px;">Completions</span>
</div>
<div id="mask"></div>
</body>
</html>
